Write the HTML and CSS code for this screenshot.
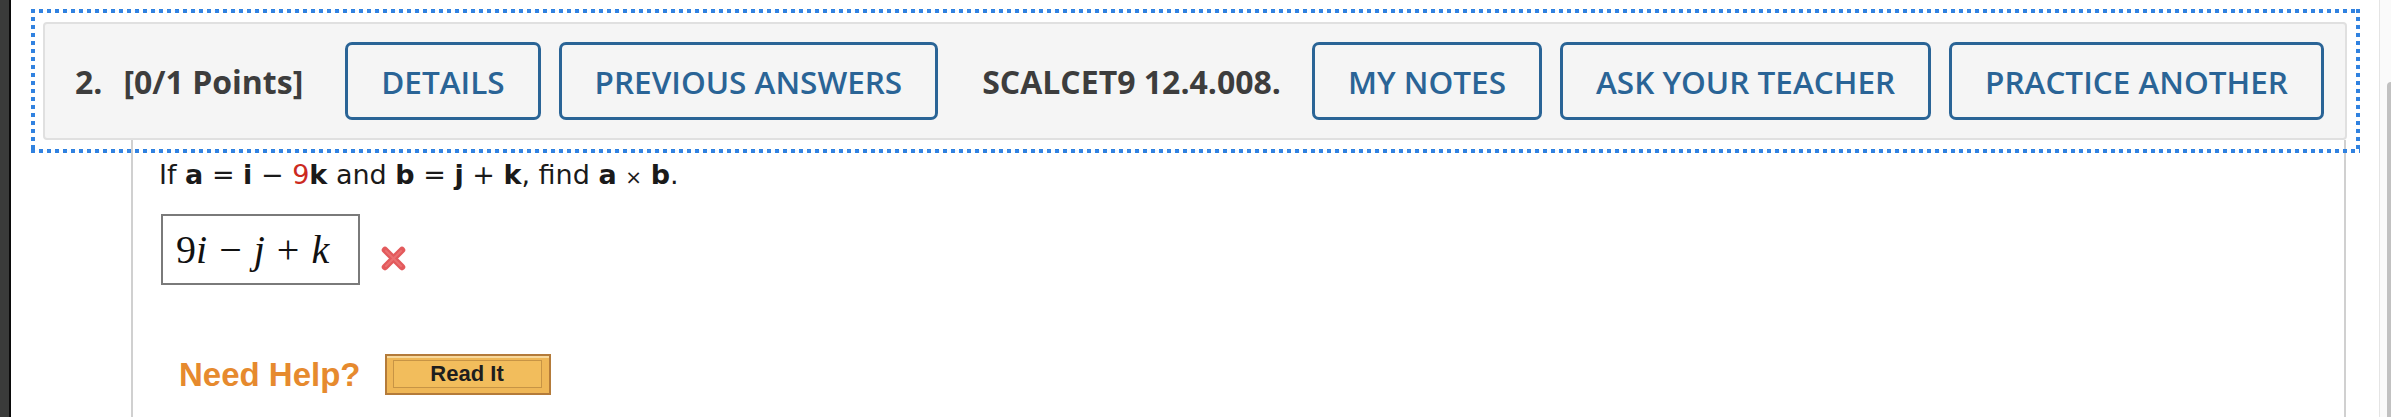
FILE: index.html
```html
<!DOCTYPE html>
<html lang="en">
<head>
  <meta charset="UTF-8">
  <title>Question 2</title>
  <link rel="stylesheet" href="styles.css">
</head>
<body>
  <div class="edge"></div>

  <main class="page">
    <section class="question">
      <div class="q-head">
        <span class="q-num">2.</span>
        <span class="q-points">[0/1 Points]</span>
        <button class="btn" type="button">DETAILS</button>
        <button class="btn" type="button">PREVIOUS ANSWERS</button>
        <span class="q-code">SCALCET9 12.4.008.</span>
        <button class="btn" type="button">MY NOTES</button>
        <button class="btn" type="button">ASK YOUR TEACHER</button>
        <button class="btn" type="button">PRACTICE ANOTHER</button>
      </div>

      <div class="q-body">
        <p class="prompt">If <b>a</b> = <b>i</b> &minus; <span class="given">9</span><b>k</b> and <b>b</b> = <b>j</b> + <b>k</b>, find <b>a</b> <span class="cross">&times;</span> <b>b</b>.</p>

        <div class="answer-row">
          <div class="answer">
            <span class="math">9<i>i</i><span class="op">&minus;</span><i>j</i><span class="op">+</span><i>k</i></span>
          </div>
          <svg class="wrong" width="27" height="27" viewBox="0 0 27 27">
            <path d="M5 5 L22 22 M22 5 L5 22" stroke="#e35a5c" stroke-width="6.5" stroke-linecap="round"/>
            <path d="M6 6 L21 21 M21 6 L6 21" stroke="#ef7f80" stroke-width="2" stroke-linecap="round" opacity="0.6"/>
          </svg>
        </div>

        <div class="help">
          <span class="help-label">Need Help?</span>
          <span class="read-it"><span class="read-it-inner">Read It</span></span>
        </div>
      </div>
    </section>
  </main>

  <div class="scrollbar"><div class="thumb"></div></div>
</body>
</html>
```

FILE: styles.css
```css
html, body {
  margin: 0;
  height: 100%;
}

body {
  display: flex;
  overflow: hidden;
  background-color: #fff;
  font-family: "Open Sans", "Liberation Sans", sans-serif;
}

.edge {
  flex: none;
  width: 9px;
  background-color: #3a3b3a;
  border-right: 2px solid #0b0b0b;
}

.page {
  flex: 1;
  min-width: 0;
  display: flex;
  flex-direction: column;
  padding: 22px 32px 0 32px;
}

.question {
  flex: 1;
  display: flex;
  flex-direction: column;
}

/* question header */
.q-head {
  position: relative;
  display: flex;
  align-items: center;
  padding: 18px 18px 18px 30px;
  background-color: #f5f5f5;
  border: 2px solid #e0e0e0;
  border-radius: 4px;
}

/* keyboard focus ring, square dots */
.q-head::after {
  content: "";
  position: absolute;
  top: -15px;
  left: -14px;
  right: -15px;
  bottom: -15px;
  pointer-events: none;
  background:
    repeating-linear-gradient(90deg, #3182e0 0 4px, transparent 4px 8px) left top / 100% 4px no-repeat,
    repeating-linear-gradient(90deg, #3182e0 0 4px, transparent 4px 8px) left bottom / 100% 4px no-repeat,
    repeating-linear-gradient(180deg, #3182e0 0 4px, transparent 4px 8px) left top / 4px 100% no-repeat,
    repeating-linear-gradient(180deg, #3182e0 0 4px, transparent 4px 8px) right top / 4px 100% no-repeat;
}

.q-num,
.q-points,
.q-code {
  font-size: 32px;
  font-weight: 700;
  color: #3d3d3d;
  white-space: nowrap;
}

.q-num {
  margin-right: 21px;
}

.q-points {
  margin-right: 42px;
}

.q-code {
  margin: 0 31px 0 26px;
}

.btn {
  flex: none;
  height: 78px;
  padding: 0 33px;
  margin-right: 18px;
  background: transparent;
  border: 3px solid #2a6496;
  border-radius: 7px;
  font-family: "Open Sans", "Liberation Sans", sans-serif;
  font-size: 31.5px;
  font-weight: 600;
  color: #2a6496;
  white-space: nowrap;
}

.btn:last-child {
  margin-right: 0;
}

/* question body */
.q-body {
  flex: 1;
  margin-left: 88px;
  margin-right: 1px;
  padding: 17px 0 0 26px;
  border-left: 2px solid #d0d0d0;
  border-right: 2px solid #d0d0d0;
}

.prompt {
  margin: 0;
  font-family: "DejaVu Sans", "Open Sans", sans-serif;
  font-size: 27px;
  line-height: 36px;
  color: #1a1a1a;
}

.prompt b {
  font-weight: 700;
}

.given {
  color: #cc2a1f;
}

.cross {
  font-size: 20px;
}

.answer-row {
  display: flex;
  align-items: flex-start;
  margin-top: 19px;
}

.answer {
  display: flex;
  align-items: center;
  box-sizing: border-box;
  width: 199px;
  height: 71px;
  margin-left: 2px;
  padding: 0 13px;
  border: 2px solid #7a7a7a;
  background-color: #fff;
}

.math {
  font-family: "Liberation Serif", "DejaVu Serif", serif;
  font-size: 40px;
  color: #111;
  white-space: nowrap;
}

.math .op {
  margin: 0 12px;
}

.wrong {
  margin: 31px 0 0 20px;
}

.help {
  display: flex;
  align-items: center;
  margin: 69px 0 0 20px;
}

.help-label {
  font-family: "Liberation Sans", Arial, sans-serif;
  font-size: 33px;
  font-weight: 700;
  color: #e68a2e;
  margin-right: 24px;
}

.read-it {
  display: inline-flex;
  padding: 4px 7px 5px 6px;
  background-color: #efb757;
  border: 2px solid #b47b3a;
  box-shadow: inset 0 2px 0 #f8d99c;
}

.read-it-inner {
  display: flex;
  align-items: center;
  justify-content: center;
  width: 147px;
  height: 26px;
  background-color: #f2bd5c;
  border: 1px solid #c79445;
  font-family: "Liberation Sans", Arial, sans-serif;
  font-size: 22px;
  font-weight: 700;
  color: #1e1e1e;
}

/* browser scrollbar sliver at the right edge */
.scrollbar {
  flex: none;
  width: 11px;
  background-color: #fafafa;
  border-left: 1px solid #e4e4e4;
  display: flex;
  justify-content: flex-end;
}

.thumb {
  width: 4px;
  margin-top: 82px;
  background-color: #c1c1c1;
  border-top-left-radius: 4px;
}
```
